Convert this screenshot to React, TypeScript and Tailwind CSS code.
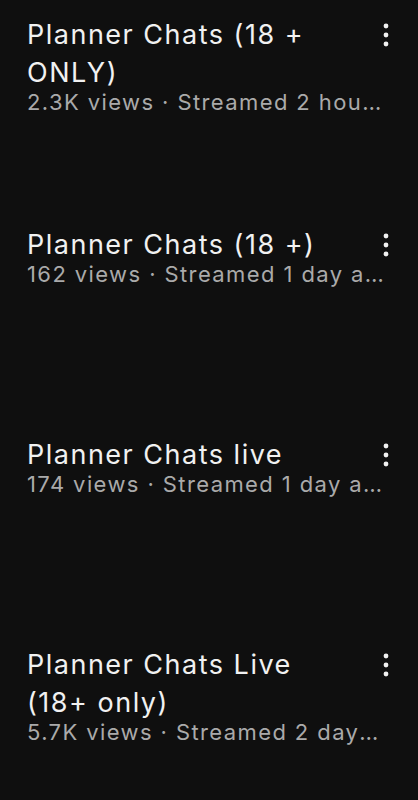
import { useMemo } from 'react';

interface Stream {
  title: string;
  views: string;
  streamed: string;
}

const streams: Stream[] = [
  { title: 'Planner Chats (18 + ONLY)', views: '2.3K views', streamed: 'Streamed 2 hours ago' },
  { title: 'Planner Chats (18 +)', views: '162 views', streamed: 'Streamed 1 day ago' },
  { title: 'Planner Chats live', views: '174 views', streamed: 'Streamed 1 day ago' },
  { title: 'Planner Chats Live (18+ only)', views: '5.7K views', streamed: 'Streamed 2 days ago' },
];

function MoreDots() {
  return (
    <svg width="20" height="24" viewBox="0 0 20 24" fill="#f1f1f1">
      <circle cx="10" cy="3" r="2.4" />
      <circle cx="10" cy="12" r="2.4" />
      <circle cx="10" cy="21" r="2.4" />
    </svg>
  );
}

function StreamRow({ stream }: { stream: Stream }) {
  return (
    <div className="h-[210px] pl-[27px] pr-[22px]">
      <div className="flex items-start">
        <h3 className="flex-1 min-w-0 pr-[36px] text-[27px] leading-[38px] tracking-[1.5px] text-[#f1f1f1] font-normal">
          {stream.title}
        </h3>
        <button className="w-5 h-[38px] flex items-center justify-center">
          <MoreDots />
        </button>
      </div>
      <p className="-mt-[3px] pr-[10px] text-[22px] leading-[26px] tracking-[1.4px] text-[#aaaaaa] truncate">
        {stream.views} · {stream.streamed}
      </p>
    </div>
  );
}

export default function App() {
  const items = useMemo(() => streams, []);

  return (
    <div
      className="min-h-screen w-full bg-[#0f0f0f] pt-4 overflow-hidden"
      style={{ fontFamily: 'Inter, Roboto, sans-serif' }}
    >
      {items.map((s) => (
        <StreamRow key={s.title} stream={s} />
      ))}
    </div>
  );
}
